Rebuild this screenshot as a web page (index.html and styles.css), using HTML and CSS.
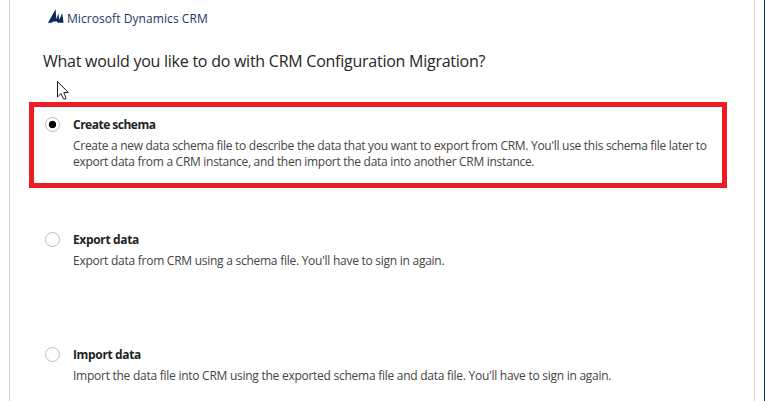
FILE: index.html
```html
<!DOCTYPE html>
<html lang="en">
<head>
    <meta charset="UTF-8">
    <meta name="viewport" content="width=device-width, initial-scale=1.0">
    <title>CRM Configuration Migration</title>
    <link rel="stylesheet" href="styles.css">
</head>
<body>
    <main class="panel">
        <header class="brand">
            <svg class="logo" width="17" height="15" viewBox="0 0 17 15">
                <path d="M0 13.8 L7.6 0.3 L8.4 10.3 L10.4 4.2 L11.2 10.8 L14.2 4.2 L15.6 13.8 H9.8 L8.8 12.6 Q4.5 12.2 3.6 13.8Z" fill="#0b2a5b"/>
            </svg>
            <span class="brand-name">Microsoft Dynamics CRM</span>
        </header>

        <h1>What would you like to do with CRM Configuration Migration?</h1>

        <form class="options">
            <label class="option highlight">
                <input type="radio" name="action" value="create" checked>
                <span class="text">
                    <strong class="create">Create schema</strong>
                    <span class="desc long">Create a new data schema file to describe the data that you want to export from CRM. You'll use this schema file later to<br>export data from a CRM instance, and then import the data into another CRM instance.</span>
                </span>
            </label>
            <label class="option">
                <input type="radio" name="action" value="export">
                <span class="text">
                    <strong>Export data</strong>
                    <span class="desc">Export data from CRM using a schema file. You'll have to sign in again.</span>
                </span>
            </label>
            <label class="option">
                <input type="radio" name="action" value="import">
                <span class="text">
                    <strong>Import data</strong>
                    <span class="desc">Import the data file into CRM using the exported schema file and data file. You'll have to sign in again.</span>
                </span>
            </label>
        </form>
    </main>

    <svg class="cursor" width="13" height="20" viewBox="0 0 13 20">
        <path d="M1.5 1.5 V17 L5 13.6 L7.6 19 H9.8 V17.4 L7.8 12.5 H12.3Z" fill="#fff" stroke="#1c1c28" stroke-width="1"/>
    </svg>
</body>
</html>
```

FILE: styles.css
```css
* {
    box-sizing: border-box;
}

body {
    margin: 0;
    height: 401px;
    padding: 0 9px;
    border-right: 1px solid #1b3663;
    background-color: #fff;
    font-family: "Open Sans", "Noto Sans", sans-serif;
    overflow: hidden;
}

.panel {
    height: 401px;
    padding: 9px 27px 0 19px;
    border-left: 1px solid #d5d5d5;
    border-right: 1px solid #d5d5d5;
}

.brand {
    display: flex;
    height: 20px;
    padding-left: 19px;
    color: #1b3663;
}

.logo {
    margin-right: 2px;
}

.brand-name {
    font-size: 12px;
    line-height: 20px;
    letter-spacing: 0.07px;
    white-space: nowrap;
}

h1 {
    margin: 20px 0 0 14px;
    height: 24px;
    color: #262626;
    font-size: 16px;
    font-weight: 400;
    line-height: 24px;
    letter-spacing: -0.25px;
    white-space: nowrap;
}

.options {
    display: flex;
    flex-direction: column;
    gap: 29px;
    margin-top: 29px;
}

.option {
    display: flex;
    flex-shrink: 0;
    width: 698px;
    height: 86px;
    padding: 10px 0 0 11px;
    border: 5px solid transparent;
}

.highlight {
    border-color: #ed1c24;
}

.option input {
    appearance: none;
    flex-shrink: 0;
    width: 15px;
    height: 15px;
    margin: 0 13px 0 0;
    border: 1px solid #bcbcbc;
    border-radius: 50%;
}

.option input:checked {
    background: radial-gradient(circle, #000 3.3px, transparent 4.1px);
}

.text {
    display: flex;
    flex-direction: column;
    gap: 5px;
    font-size: 12px;
    line-height: 16px;
    white-space: nowrap;
}

.text strong {
    color: #222;
    letter-spacing: -0.35px;
}

.text .create {
    letter-spacing: -0.5px;
}

.desc {
    color: #444;
    letter-spacing: -0.26px;
}

.long {
    letter-spacing: -0.29px;
}

.cursor {
    position: absolute;
    left: 56px;
    top: 80px;
}
```
